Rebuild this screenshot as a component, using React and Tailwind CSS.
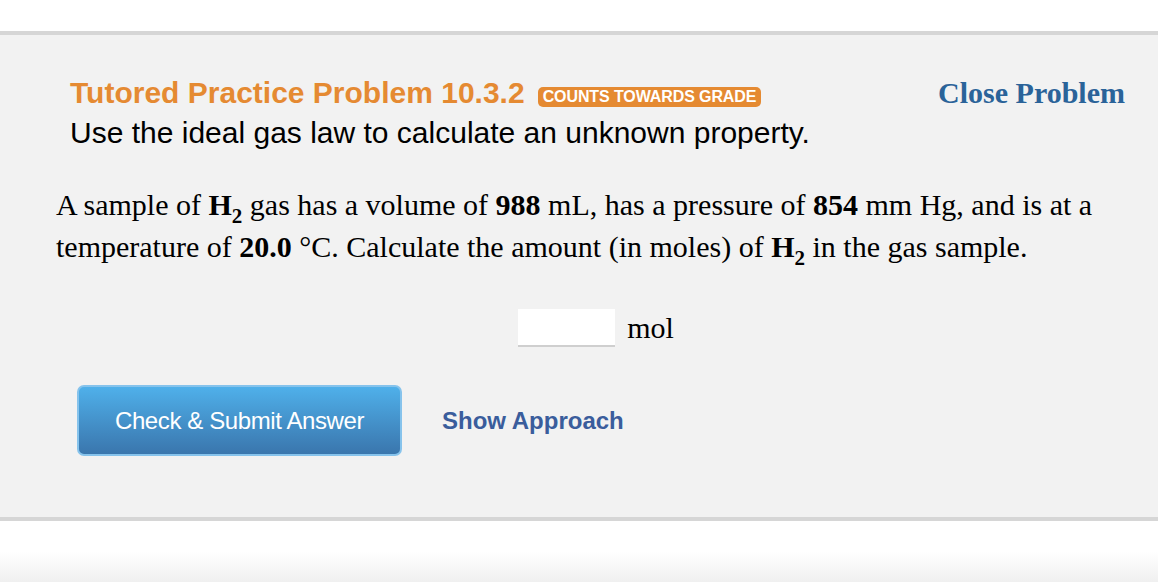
import React from "react";

const sans = { fontFamily: '"Liberation Sans", Arial, sans-serif' };

function App() {
  return (
    <div className="w-[1158px] h-[582px] bg-white overflow-hidden flex flex-col">
      <div className="h-[31px] bg-white" />

      {/* problem panel */}
      <div className="h-[490px] bg-[#f2f2f2] border-y-4 border-[#d6d6d6] flex flex-col">
        <div className="flex justify-between items-start pl-[70px] pr-[33px] pt-[40px]">
          <div>
            <div className="flex items-center font-['Liberation_Sans',Arial,sans-serif]">
              <span className="text-[30px] leading-[36px] font-bold text-[#e58a32]">
                Tutored Practice Problem 10.3.2
              </span>
              <span className="ml-[13px] mt-[7px] h-[20px] px-[5px] rounded-[5px] bg-[#e58a32] text-white text-[16px] leading-[20px] font-bold tracking-[-0.1px]">
                COUNTS TOWARDS GRADE
              </span>
            </div>
            <div className="mt-[2px] text-[30px] leading-[40px] text-black font-['Liberation_Sans',Arial,sans-serif]">
              Use the ideal gas law to calculate an unknown property.
            </div>
          </div>
          <a className="text-[30px] leading-[36px] font-bold text-[#2a6399] font-['Liberation_Serif','Times_New_Roman',serif] cursor-pointer">
            Close Problem
          </a>
        </div>

        <p className="pl-[56px] pr-[50px] mt-[31px] text-[30px] leading-[42px] text-black font-['Liberation_Serif','Times_New_Roman',serif]">
          A sample of <b>H<sub className="text-[21px] bottom-[-8px]">2</sub></b> gas has a volume of <b>988</b> mL, has a
          pressure of <b>854</b> mm Hg, and is at a temperature of <b>20.0</b> °C. Calculate the amount (in
          moles) of <b>H<sub className="text-[21px] bottom-[-8px]">2</sub></b> in the gas sample.
        </p>

        <div className="flex justify-center items-center gap-[12px] mt-[41px] pl-[34px]">
          <input
            type="text"
            className="w-[97px] h-[38px] bg-white border-b-2 border-[#cfcfcf] outline-none"
          />
          <span className="text-[30px] leading-[38px] text-black font-['Liberation_Serif','Times_New_Roman',serif]">mol</span>
        </div>

        <div className="flex items-center pl-[77px] mt-[38px]" style={sans}>
          <button className="w-[325px] h-[71px] rounded-[7px] border-2 border-[#86c3ec] bg-gradient-to-b from-[#4fb0ea] to-[#3a76ad] text-white text-[24px] tracking-[-0.4px]">
            Check &amp; Submit Answer
          </button>
          <a className="ml-[40px] text-[24px] font-bold text-[#3a5d9c] cursor-pointer">Show Approach</a>
        </div>
      </div>

      <div className="flex-1 bg-gradient-to-b from-white via-white to-[#f0f0f0]" />
    </div>
  );
}

export default App;
